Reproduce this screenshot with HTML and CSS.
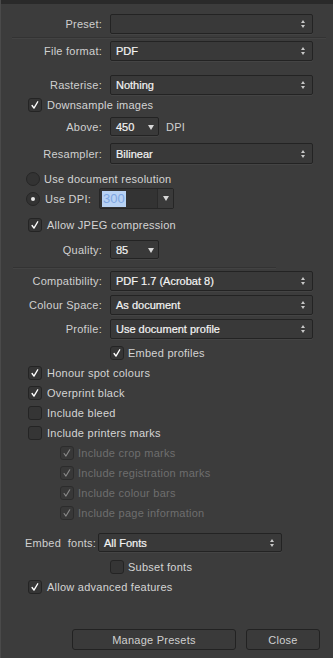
FILE: index.html
```html
<!DOCTYPE html>
<html>
<head>
<meta charset="utf-8">
<link rel="stylesheet" href="styles.css">
</head>
<body>
<div class="topbar"></div>
<div class="panel">
  <div class="row field-row mt10">
    <span class="label">Preset:</span>
    <div class="select wide"><span class="value"></span><span class="updown"><i class="up"></i><i class="down"></i></span></div>
  </div>
  <div class="sep mt3"></div>
  <div class="row field-row mt3">
    <span class="label">File format:</span>
    <div class="select wide"><span class="value">PDF</span><span class="updown"><i class="up"></i><i class="down"></i></span></div>
  </div>
  <div class="row field-row mt14">
    <span class="label">Rasterise:</span>
    <div class="select wide"><span class="value">Nothing</span><span class="updown"><i class="up"></i><i class="down"></i></span></div>
  </div>
  <div class="row check-row lvl1 mt3">
    <span class="box on"><svg viewBox="0 0 14 14"><path d="M3.6 7.6 L5.8 10.6 L10.2 3.2"/></svg></span>
    <span class="text">Downsample images</span>
  </div>
  <div class="row field-row mt5">
    <span class="label">Above:</span>
    <div class="select small"><span class="value">450</span><i class="down single"></i></div>
    <span class="unit">DPI</span>
  </div>
  <div class="row field-row mt7">
    <span class="label">Resampler:</span>
    <div class="select wide tall"><span class="value">Bilinear</span><span class="updown"><i class="up"></i><i class="down"></i></span></div>
  </div>
  <div class="row check-row lvl1r mt8">
    <span class="radio"></span>
    <span class="text">Use document resolution</span>
  </div>
  <div class="row dpi-row mt2">
    <span class="radio on"></span>
    <span class="text dpi-label">Use DPI:</span>
    <div class="combo">
      <span class="combo-input"><span class="sel">300</span></span>
      <span class="combo-btn"><i class="down single"></i></span>
    </div>
  </div>
  <div class="row check-row lvl1 mt9">
    <span class="box on"><svg viewBox="0 0 14 14"><path d="M3.6 7.6 L5.8 10.6 L10.2 3.2"/></svg></span>
    <span class="text">Allow JPEG compression</span>
  </div>
  <div class="row field-row mt8">
    <span class="label">Quality:</span>
    <div class="select small"><span class="value">85</span><i class="down single"></i></div>
  </div>
  <div class="sep short mt8"></div>
  <div class="row field-row mt3">
    <span class="label">Compatibility:</span>
    <div class="select wide"><span class="value">PDF 1.7 (Acrobat 8)</span><span class="updown"><i class="up"></i><i class="down"></i></span></div>
  </div>
  <div class="row field-row mt4">
    <span class="label">Colour Space:</span>
    <div class="select wide"><span class="value">As document</span><span class="updown"><i class="up"></i><i class="down"></i></span></div>
  </div>
  <div class="row field-row mt4">
    <span class="label">Profile:</span>
    <div class="select wide"><span class="value">Use document profile</span><span class="updown"><i class="up"></i><i class="down"></i></span></div>
  </div>
  <div class="row check-row lvl2 mt7">
    <span class="box on"><svg viewBox="0 0 14 14"><path d="M3.6 7.6 L5.8 10.6 L10.2 3.2"/></svg></span>
    <span class="text">Embed profiles</span>
  </div>
  <div class="checklist mt6">
    <div class="row check-row lvl1">
      <span class="box on"><svg viewBox="0 0 14 14"><path d="M3.6 7.6 L5.8 10.6 L10.2 3.2"/></svg></span>
      <span class="text">Honour spot colours</span>
    </div>
    <div class="row check-row lvl1">
      <span class="box on"><svg viewBox="0 0 14 14"><path d="M3.6 7.6 L5.8 10.6 L10.2 3.2"/></svg></span>
      <span class="text">Overprint black</span>
    </div>
    <div class="row check-row lvl1">
      <span class="box"></span>
      <span class="text">Include bleed</span>
    </div>
    <div class="row check-row lvl1">
      <span class="box"></span>
      <span class="text">Include printers marks</span>
    </div>
    <div class="row check-row lvl3 disabled">
      <span class="box on"><svg viewBox="0 0 14 14"><path d="M3.6 7.6 L5.8 10.6 L10.2 3.2"/></svg></span>
      <span class="text">Include crop marks</span>
    </div>
    <div class="row check-row lvl3 disabled">
      <span class="box on"><svg viewBox="0 0 14 14"><path d="M3.6 7.6 L5.8 10.6 L10.2 3.2"/></svg></span>
      <span class="text">Include registration marks</span>
    </div>
    <div class="row check-row lvl3 disabled">
      <span class="box on"><svg viewBox="0 0 14 14"><path d="M3.6 7.6 L5.8 10.6 L10.2 3.2"/></svg></span>
      <span class="text">Include colour bars</span>
    </div>
    <div class="row check-row lvl3 disabled">
      <span class="box on"><svg viewBox="0 0 14 14"><path d="M3.6 7.6 L5.8 10.6 L10.2 3.2"/></svg></span>
      <span class="text">Include page information</span>
    </div>
  </div>
  <div class="row fonts-row mt13">
    <span class="fonts-label">Embed&nbsp; fonts:</span>
    <div class="select fonts"><span class="value">All Fonts</span><span class="updown"><i class="up"></i><i class="down"></i></span></div>
  </div>
  <div class="row check-row lvl2 mt8">
    <span class="box"></span>
    <span class="text">Subset fonts</span>
  </div>
  <div class="row check-row lvl1 mt6">
    <span class="box on"><svg viewBox="0 0 14 14"><path d="M3.6 7.6 L5.8 10.6 L10.2 3.2"/></svg></span>
    <span class="text">Allow advanced features</span>
  </div>
  <div class="buttons">
    <button class="btn manage">Manage Presets</button>
    <button class="btn close">Close</button>
  </div>
</div>
</body>
</html>
```
FILE: styles.css
```css
* { box-sizing: border-box; }
html, body {
  margin: 0;
  padding: 0;
  background: #3c3c3c;
  height: 658px;
  overflow: hidden;
}
body {
  font-family: "Liberation Sans", Arial, sans-serif;
  font-size: 11px;
  color: #d2d2d2;
  border-left: 1px solid #4a4a4a;
}
.topbar {
  height: 4px;
  background: #2a2a2a;
}
.panel {
  display: flex;
  flex-direction: column;
}
.mt2 { margin-top: 2px; }
.mt3 { margin-top: 3px; }
.mt4 { margin-top: 4px; }
.mt5 { margin-top: 5px; }
.mt6 { margin-top: 6px; }
.mt7 { margin-top: 7px; }
.mt8 { margin-top: 8px; }
.mt9 { margin-top: 9px; }
.mt10 { margin-top: 10px; }
.mt13 { margin-top: 13px; }
.mt14 { margin-top: 14px; }

.row {
  display: flex;
  align-items: center;
  white-space: nowrap;
}
.field-row .label {
  width: 101px;
  text-align: right;
  margin-right: 8px;
  letter-spacing: 0.25px;
  color: #d0d0d0;
}
.select {
  position: relative;
  height: 20px;
  background: #393939;
  border: 1px solid #232323;
  border-radius: 2px;
  display: flex;
  align-items: center;
  padding-left: 5px;
  box-shadow: 0 1px 0 #444;
}
.select .value {
  color: #f4f4f4;
  letter-spacing: 0;
  font-size: 11px;
  -webkit-text-stroke: 0.2px #f4f4f4;
}
.select.wide { width: 203px; }
.select.tall { height: 21px; }
.select.small { width: 49px; height: 19px; }
.select.fonts { width: 184px; height: 19px; }
.updown {
  position: absolute;
  right: 7px;
  top: 50%;
  transform: translateY(-50%);
  display: flex;
  flex-direction: column;
  gap: 2px;
}
.up, .down {
  display: block;
  width: 0;
  height: 0;
  border-left: 2.5px solid transparent;
  border-right: 2.5px solid transparent;
}
.up { border-bottom: 3px solid #c8c8c8; }
.down { border-top: 3px solid #c8c8c8; }
.down.single {
  position: absolute;
  right: 4px;
  top: 7px;
  border-left-width: 3px;
  border-right-width: 3px;
  border-top-width: 5px;
  border-top-color: #d8d8d8;
}
.unit {
  margin-left: 7px;
  color: #d0d0d0;
  letter-spacing: 0.25px;
}

.sep {
  height: 1px;
  background: #333333;
  margin-left: 11px;
  width: 314px;
  box-shadow: 0 1px 0 #434343;
}
.sep.short { margin-left: 12px; width: 263px; }

.check-row { height: 14px; }
.check-row .text {
  margin-left: 4px;
  letter-spacing: 0.25px;
  color: #d4d4d4;
}
.lvl1 { padding-left: 27px; }
.lvl1 .text { margin-left: 5px; }
.lvl1r { padding-left: 25px; }
.lvl2 { padding-left: 109px; }
.lvl3 { padding-left: 59px; }
.box {
  width: 14px;
  height: 14px;
  flex: none;
  background: #353535;
  border: 1px solid #242424;
  border-radius: 3px;
  display: flex;
  align-items: center;
  justify-content: center;
}
.box svg { width: 14px; height: 14px; }
.box path {
  fill: none;
  stroke: #ffffff;
  stroke-width: 1.6;
  stroke-linecap: round;
  stroke-linejoin: round;
}
.disabled .box { background: #383838; border-color: #2c2c2c; }
.disabled .box path { stroke: #8a8a8a; stroke-width: 1.3; }
.disabled .text { color: #6e6e6e; }

.checklist {
  display: flex;
  flex-direction: column;
  gap: 6px;
}

.radio {
  width: 14px;
  height: 14px;
  flex: none;
  border-radius: 50%;
  background: #333333;
  border: 1px solid #262626;
  position: relative;
}
.radio.on::after {
  content: "";
  position: absolute;
  left: 4px;
  top: 4px;
  width: 4px;
  height: 4px;
  border-radius: 50%;
  background: #e8e8e8;
}
.dpi-row {
  padding-left: 25px;
  height: 21px;
}
.dpi-row .text.dpi-label {
  margin-left: 5px;
  width: 54px;
  letter-spacing: 0.25px;
}
.combo {
  width: 75px;
  height: 21px;
  display: flex;
  border: 1px solid #262626;
  border-radius: 2px;
  background: #333333;
}
.combo-input {
  flex: 1;
  display: flex;
  align-items: center;
  padding-left: 2px;
}
.sel {
  background: #b8d2f4;
  color: #7ea6e2;
  font-size: 13px;
  line-height: 16px;
  padding: 0 1px;
}
.combo-btn {
  position: relative;
  width: 16px;
  border-left: 1px solid #2a2a2a;
  background: #3a3a3a;
}
.combo-btn .down.single { right: 4px; top: 7px; }

.fonts-row { height: 19px; }
.fonts-label {
  margin-left: 24px;
  width: 73px;
  letter-spacing: 0.25px;
  color: #d0d0d0;
}

.buttons {
  margin-top: 35px;
  display: flex;
  gap: 10px;
  padding-left: 71px;
}
.btn {
  font-family: "Liberation Sans", Arial, sans-serif;
  font-size: 11px;
  letter-spacing: 0.25px;
  color: #d0d0d0;
  background: #3a3a3a;
  border: 1px solid #222222;
  border-radius: 3px;
  height: 21px;
  padding: 0;
}
.btn.manage { width: 164px; }
.btn.close { width: 74px; }
```
